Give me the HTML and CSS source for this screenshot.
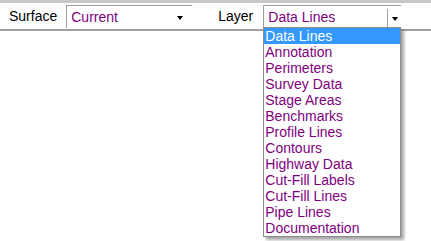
FILE: index.html
```html
<!DOCTYPE html>
<html lang="en">
<head>
  <meta charset="UTF-8" />
  <title>Layer Picker</title>
  <link rel="stylesheet" href="styles.css">
</head>
<body>
  <div class="toolbar">
    <span class="label">Surface</span>
    <div class="select surface">
      <span class="value">Current</span>
      <span class="arrow"></span>
    </div>
    <span class="label layer-label">Layer</span>
    <div class="select layer">
      <span class="value">Data Lines</span>
      <span class="arrow-btn"><span class="arrow"></span></span>
      <ul class="dropdown">
        <li class="active">Data Lines</li>
        <li>Annotation</li>
        <li>Perimeters</li>
        <li>Survey Data</li>
        <li>Stage Areas</li>
        <li>Benchmarks</li>
        <li>Profile Lines</li>
        <li>Contours</li>
        <li>Highway Data</li>
        <li>Cut-Fill Labels</li>
        <li>Cut-Fill Lines</li>
        <li>Pipe Lines</li>
        <li>Documentation</li>
      </ul>
    </div>
  </div>
</body>
</html>
```

FILE: styles.css
```css
html {
  height: 100%;
}
body {
  margin: 0;
  min-height: 100%;
  background: #fff;
  font-family: "Liberation Sans", Arial, sans-serif;
  font-size: 14px;
  color: #000;
}
.toolbar {
  position: relative;
  z-index: 1;
  display: flex;
  align-items: center;
  border-top: 3px solid #c8c8c8;
  border-bottom: 2px solid #a0a0a0;
  padding: 2px 0 1px 9px;
}
.label {
  line-height: 23px;
}
.layer-label {
  margin-left: 26px;
}
.select {
  position: relative;
  display: flex;
  align-items: center;
  height: 22px;
  margin-left: 9px;
  border-top: 1px solid #a0a0a0;
  border-left: 1px solid #a0a0a0;
  color: #800080;
}
.select .value {
  flex: 1;
  padding-left: 4px;
}
.surface {
  width: 125px;
}
.layer {
  width: 137px;
  margin-left: 10px;
}
.arrow {
  display: block;
  width: 0;
  height: 0;
  border-left: 3px solid transparent;
  border-right: 3px solid transparent;
  border-top: 4px solid #000;
}
.surface .arrow {
  margin-right: 9px;
  margin-top: 2px;
}
.arrow-btn {
  display: flex;
  align-items: center;
  justify-content: center;
  width: 13px;
  height: 19px;
  margin-top: 3px;
  border-left: 1px solid #a0a0a0;
}
.dropdown {
  position: absolute;
  z-index: 2;
  top: 21px;
  left: -1px;
  width: 136px;
  margin: 0;
  padding: 0;
  list-style: none;
  background: #fff;
  border: 1px solid #8c8c8c;
  box-shadow: 3px 3px 3px rgba(0, 0, 0, 0.35);
}
.dropdown li {
  height: 16px;
  line-height: 16px;
  padding-left: 1px;
  color: #800080;
}
.dropdown li.active {
  background: #3399ff;
  color: #fff;
}
```
